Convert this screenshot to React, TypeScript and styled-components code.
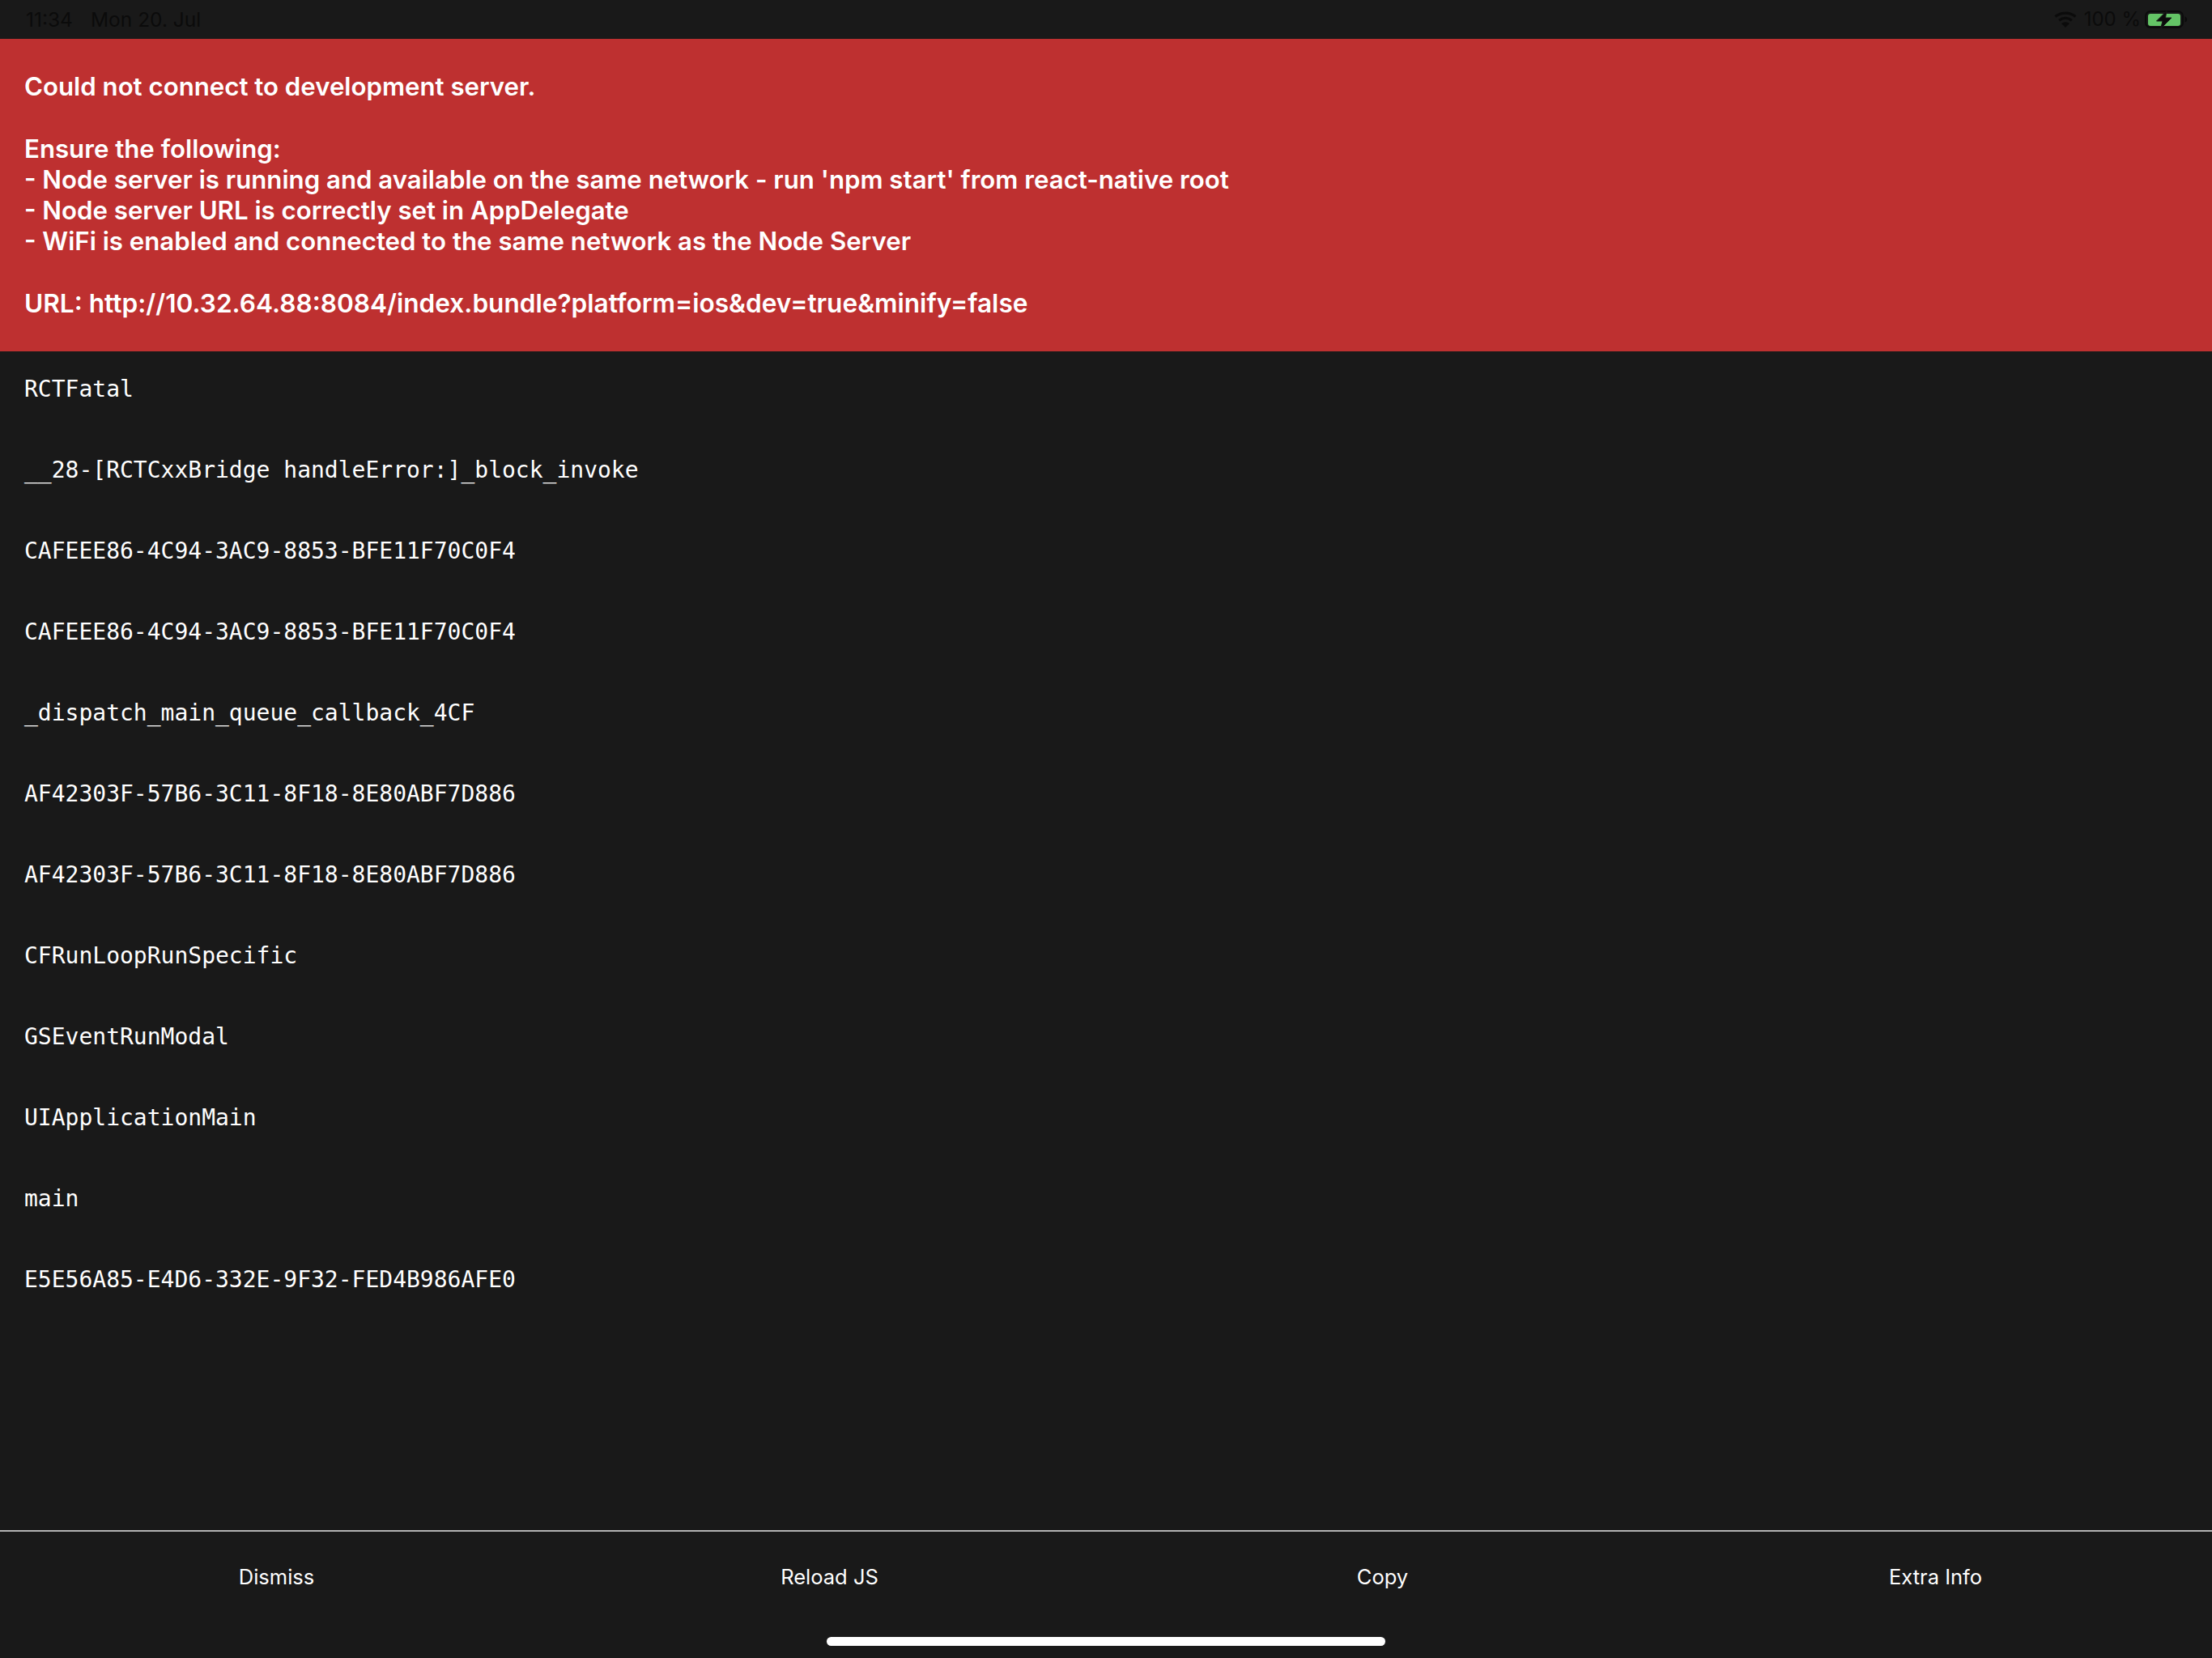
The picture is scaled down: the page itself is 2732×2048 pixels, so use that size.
import React from 'react';
import styled, { createGlobalStyle } from 'styled-components';

const Global = createGlobalStyle`
  html, body { margin: 0; padding: 0; background: #191919; }
  * { box-sizing: border-box; }
`;

const Screen = styled.div`
  width: 2732px;
  height: 2048px;
  display: flex;
  flex-direction: column;
  background: #191919;
  overflow: hidden;
`;

const StatusBar = styled.div`
  height: 48px;
  flex: none;
  display: flex;
  align-items: center;
  justify-content: space-between;
  padding: 0 30px 0 32px;
  color: #0b0b0b;
  font: 400 24.5px/30px Inter, "Liberation Sans", sans-serif;
`;

const StatusLeft = styled.div`
  display: flex;
  gap: 22px;
`;

const StatusRight = styled.div`
  display: flex;
  align-items: center;
  font-size: 24px;
`;

const WifiIcon = styled.svg`
  margin-right: 9px;
`;

const BatteryIcon = styled.svg`
  margin-left: 5px;
`;

const Banner = styled.div`
  flex: none;
  height: 386px;
  padding: 40px 30px 0;
  background: #be3030;
  color: #fff;
  font: 600 31.2px/38.3px Inter, "Liberation Sans", sans-serif;
  white-space: pre-wrap;
`;

const UrlLine = styled.span`
  font-size: 31.6px;
`;

const Stack = styled.div`
  flex: 1;
  padding: 22px 30px 0;
  display: flex;
  flex-direction: column;
`;

const Frame = styled.div`
  height: 100px;
  flex: none;
  color: #fff;
  font: 400 28px/50px "DejaVu Sans Mono", monospace;
  white-space: pre;
`;

const Footer = styled.div`
  flex: none;
  height: 158px;
  border-top: 2px solid #b4b4b4;
  display: grid;
  grid-template-columns: repeat(4, 1fr);
  align-items: start;
`;

const Action = styled.div`
  height: 112px;
  display: flex;
  align-items: center;
  justify-content: center;
  color: #fff;
  font: 400 25.5px/32px Inter, "Liberation Sans", sans-serif;
`;

const HomeBar = styled.div`
  position: absolute;
  left: 1021px;
  top: 2022px;
  width: 690px;
  height: 11px;
  border-radius: 6px;
  background: #fff;
`;

const frames = [
  'RCTFatal',
  '__28-[RCTCxxBridge handleError:]_block_invoke',
  'CAFEEE86-4C94-3AC9-8853-BFE11F70C0F4',
  'CAFEEE86-4C94-3AC9-8853-BFE11F70C0F4',
  '_dispatch_main_queue_callback_4CF',
  'AF42303F-57B6-3C11-8F18-8E80ABF7D886',
  'AF42303F-57B6-3C11-8F18-8E80ABF7D886',
  'CFRunLoopRunSpecific',
  'GSEventRunModal',
  'UIApplicationMain',
  'main',
  'E5E56A85-E4D6-332E-9F32-FED4B986AFE0',
];

const message = `Could not connect to development server.

Ensure the following:
- Node server is running and available on the same network - run 'npm start' from react-native root
- Node server URL is correctly set in AppDelegate
- WiFi is enabled and connected to the same network as the Node Server

`;

const url = 'URL: http://10.32.64.88:8084/index.bundle?platform=ios&dev=true&minify=false';

const Wifi = () => (
  <WifiIcon width="28" height="20" viewBox="0 0 28 20" fill="none" stroke="#0b0b0b" strokeWidth="3.2">
    <path d="M1.5 6.5C8.8 0.6 19.2 0.6 26.5 6.5" />
    <path d="M6.2 11.2C11 7.4 17 7.4 21.8 11.2" />
    <path d="M14 20L9 15C12 12.8 16 12.8 19 15Z" fill="#0b0b0b" stroke="none" />
  </WifiIcon>
);

const Battery = () => (
  <BatteryIcon width="53" height="24" viewBox="0 0 53 24">
    <rect x="1" y="2" width="46" height="20" rx="6" fill="none" stroke="#0b0b0b" strokeWidth="2" />
    <rect x="4" y="5" width="40" height="15" rx="3" fill="#64c466" />
    <path d="M49.5 8.5C53 9.5 53 14.5 49.5 15.5Z" fill="#0b0b0b" />
    <path d="M27 1.5L14.5 14H22L19.5 23.5L33 10H25.5Z" fill="#0b0b0b" stroke="#191919" strokeWidth="1" />
  </BatteryIcon>
);

export default function App() {
  return (
    <Screen>
      <Global />
      <StatusBar>
        <StatusLeft>
          <span>11:34</span>
          <span>Mon 20. Jul</span>
        </StatusLeft>
        <StatusRight>
          <Wifi />
          <span>100 %</span>
          <Battery />
        </StatusRight>
      </StatusBar>
      <Banner>
        {message}
        <UrlLine>{url}</UrlLine>
      </Banner>
      <Stack>
        {frames.map((f, i) => (
          <Frame key={i}>{f}</Frame>
        ))}
      </Stack>
      <Footer>
        <Action>Dismiss</Action>
        <Action>Reload JS</Action>
        <Action>Copy</Action>
        <Action>Extra Info</Action>
      </Footer>
      <HomeBar />
    </Screen>
  );
}
